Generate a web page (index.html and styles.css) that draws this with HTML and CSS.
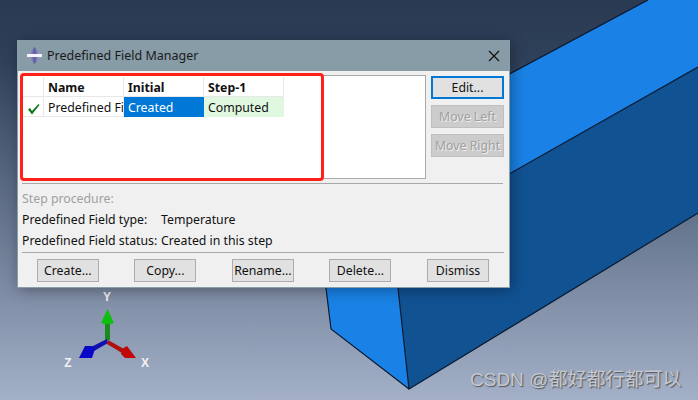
FILE: index.html
```html
<!DOCTYPE html>
<html lang="en">
<head>
  <meta charset="UTF-8">
  <meta name="viewport" content="width=device-width, initial-scale=1.0">
  <title>Predefined Field Manager</title>
  <link rel="stylesheet" href="styles.css">
</head>
<body>
  <div class="viewport">
    <!-- model in the viewport -->
    <svg class="model" width="698" height="400" viewBox="0 0 698 400">
      <polygon class="face-light" points="648,0 698,0 698,67 398,237 326,288 326,172"/>
      <polygon class="face-dark" points="698,67 698,213 409,389 398,288 398,237"/>
      <polygon class="face-light" points="326,288 398,288 409,389 331,329"/>
      <path class="edge" d="M648 0L326 172M698 67L398 237M698 213L409 389L398 288M409 389L331 329L326 288"/>
    </svg>

    <!-- axis triad -->
    <svg class="triad" width="110" height="90" viewBox="0 0 110 90">
      <text class="axis-label" x="57" y="16" text-anchor="middle">Y</text>
      <text class="axis-label" x="18" y="82" text-anchor="middle">Z</text>
      <text class="axis-label" x="95" y="82" text-anchor="middle">X</text>
      <path d="M55 55V38h5v17z" fill="#1c8a1c"/>
      <path d="M57.500 24L64 38L60 39H55L51 38z" fill="#0fbf0f"/>
      <path d="M57 54L41 62L44 66L58 58z" fill="#1010b0"/>
      <path d="M29 73L35 61L42 61L45 64L42 73z" fill="#0808c8"/>
      <path d="M58 55L74 64L72 68L57 59z" fill="#b01010"/>
      <path d="M86 73L77 61L72 64L71 69L75 73z" fill="#c00808"/>
    </svg>

    <div class="watermark">CSDN @都好都行都可以</div>

    <div class="dialog">
      <div class="titlebar">
        <svg class="title-icon" width="15" height="17" viewBox="0 0 15 17">
          <defs>
            <linearGradient id="icon-fill">
              <stop offset="0" stop-color="#a8a8d0"/>
              <stop offset="0.5" stop-color="#5c5ca4"/>
              <stop offset="1" stop-color="#a8a8d0"/>
            </linearGradient>
          </defs>
          <polygon points="7.500,0 10,3 13,7 13,10 10,14 7.500,17 5,14 2,10 2,7 5,3" fill="url(#icon-fill)"/>
          <rect x="0" y="7" width="15" height="3" fill="#f4f4fa"/>
        </svg>
        <span class="title-text">Predefined Field Manager</span>
        <svg class="close-icon" width="12" height="12" viewBox="0 0 12 12">
          <path d="M1 1L11 11M11 1L1 11" stroke="#111" stroke-width="1.200" fill="none"/>
        </svg>
      </div>

      <div class="body">
        <div class="top-area">
          <div class="listbox">
            <div class="row">
              <div class="cell cell-check head"></div>
              <div class="cell cell-name head">Name</div>
              <div class="cell cell-step head">Initial</div>
              <div class="cell cell-step head">Step-1</div>
            </div>
            <div class="row">
              <div class="cell cell-check">
                <svg width="12" height="11" viewBox="0 0 12 11">
                  <path d="M0 5.500L2 4L4 7L10.500 0L11.500 1L4 10.500z" fill="#0c7a1c"/>
                </svg>
              </div>
              <div class="cell cell-name">Predefined Fi</div>
              <div class="cell cell-step selected">Created</div>
              <div class="cell cell-step computed">Computed</div>
            </div>
          </div>
          <div class="side-buttons">
            <button class="btn btn-side btn-focus">Edit...</button>
            <button class="btn btn-side btn-disabled">Move Left</button>
            <button class="btn btn-side btn-disabled">Move Right</button>
          </div>
        </div>

        <hr class="sep">

        <div class="info">
          <p class="muted">Step procedure:</p>
          <p><span class="info-label">Predefined Field type:</span>Temperature</p>
          <p><span class="info-label">Predefined Field status:</span>Created in this step</p>
        </div>

        <hr class="sep sep-lower">

        <div class="footer">
          <button class="btn">Create...</button>
          <button class="btn">Copy...</button>
          <button class="btn">Rename...</button>
          <button class="btn">Delete...</button>
          <button class="btn">Dismiss</button>
        </div>
      </div>

      <!-- annotation drawn on the screenshot -->
      <div class="red-box"></div>
    </div>
  </div>
</body>
</html>
```

FILE: styles.css
```css
* {
  box-sizing: border-box;
}
html, body {
  margin: 0;
  padding: 0;
}
body {
  font-family: "Noto Sans", Arial, sans-serif;
  font-size: 12.300px;
  color: #111;
}
.viewport {
  position: relative;
  width: 698px;
  height: 400px;
  overflow: hidden;
  background: linear-gradient(#2a3a52, #2f405a 15%, #a3b0c8);
}
.model {
  position: absolute;
  left: 0;
  top: 0;
}
.face-light {
  fill: #1a82e6;
}
.face-dark {
  fill: #115293;
}
.edge {
  fill: none;
  stroke: #0a1a30;
  stroke-width: 1.200;
}
.triad {
  position: absolute;
  left: 50px;
  top: 285px;
}
.axis-label {
  font-family: "Liberation Sans", Arial, sans-serif;
  font-size: 12px;
  font-weight: bold;
  fill: #f2f2f2;
}
.watermark {
  position: absolute;
  left: 470px;
  top: 367px;
  font-size: 19px;
  line-height: 26px;
  font-family: "Liberation Sans", "Noto Sans CJK SC", sans-serif;
  color: #c4c8d0;
  text-shadow: 1px 1px 1px #555;
  white-space: nowrap;
}

/* dialog */
.dialog {
  position: absolute;
  left: 17px;
  top: 40px;
  width: 493px;
  height: 248px;
  background: #f0f0f0;
  border: 1px solid #8a9ea8;
  border-top: 0;
  box-shadow: 2px 2px 14px rgba(0, 0, 0, 0.35);
}
.titlebar {
  display: flex;
  align-items: center;
  height: 31px;
  padding: 0 9px 0 9px;
  background: #879ca6;
  gap: 5px;
}
.title-text {
  flex: 1;
  font-size: 12.500px;
  color: #1a1a1a;
}
.body {
  padding: 4px 5px 0 4px;
}
.top-area {
  display: flex;
  gap: 5px;
}
.listbox {
  width: 405px;
  height: 104px;
  background: #fff;
  border: 1px solid #aaa;
  padding-top: 1px;
}
.row {
  display: flex;
  height: 20px;
}
.cell {
  padding: 1px 0 0 4px;
  line-height: 19px;
  white-space: nowrap;
  overflow: hidden;
  border-right: 1px solid #e8e8e8;
  border-bottom: 1px solid #e8e8e8;
}
.head {
  font-weight: bold;
}
.cell-check {
  width: 21px;
  padding: 4px 0 0 5px;
}
.cell-name {
  width: 80px;
}
.cell-step {
  width: 80px;
}
.selected {
  background: #0078d7;
  color: #fff;
  border-color: #0078d7;
}
.computed {
  background: #e0f8e0;
  border-color: #e0f8e0;
}
.side-buttons {
  display: flex;
  flex-direction: column;
  gap: 6px;
  margin-top: 1px;
}
.btn {
  width: 62px;
  height: 23px;
  padding: 0;
  font-family: inherit;
  font-size: 12.300px;
  color: #111;
  background: #e1e1e1;
  border: 1px solid #adadad;
  border-radius: 0;
}
.btn-side {
  width: 73px;
}
.btn-focus {
  border: 2px solid #0078d7;
}
.btn-disabled {
  background: #cccccc;
  border-color: #bfbfbf;
  color: #a0a0a0;
  text-shadow: 1px 1px 0 #f0f0f0;
}
.sep {
  height: 1px;
  margin: 4px 1px 0 0;
  border: 0;
  background: #a8a8a8;
}
.sep-lower {
  margin-top: 1px;
  margin-right: 0;
}
.info {
  padding: 4px 0 0 0;
}
.info p {
  margin: 0;
  height: 21px;
  line-height: 21px;
}
.info .muted {
  color: #a0a0a0;
}
.info-label {
  display: inline-block;
  width: 139px;
}
.footer {
  display: flex;
  justify-content: space-between;
  padding: 6px 15px 0 14.800px;
}
.red-box {
  position: absolute;
  left: 2px;
  top: 33px;
  width: 304px;
  height: 108px;
  border: 3px solid #ff2018;
  border-radius: 4px;
}
```
